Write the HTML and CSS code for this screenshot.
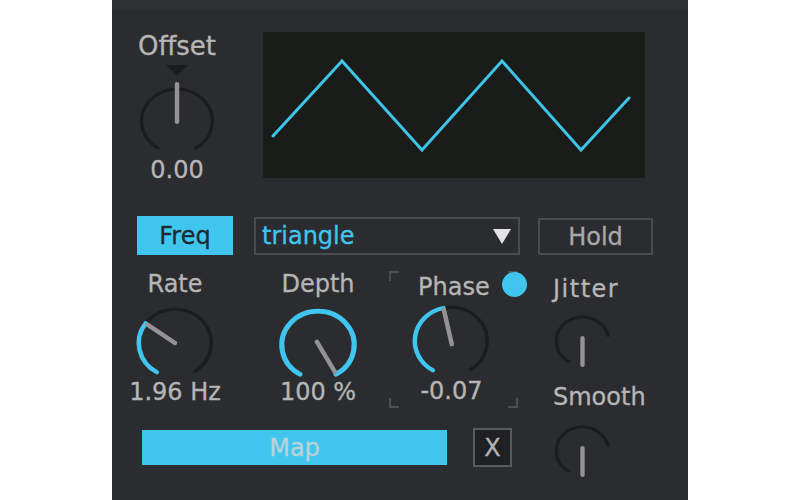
FILE: index.html
```html
<!DOCTYPE html>
<html>
<head>
<meta charset="utf-8">
<link rel="stylesheet" href="styles.css">
</head>
<body>
<div class="panel">
  <div class="top">
    <div class="offset">
      <div class="label big">Offset</div>
      <svg class="knob-offset" viewBox="0 0 76 92" width="84" height="92" preserveAspectRatio="none">
        <polygon class="mark" points="28,1 48,1 38,12"/>
        <path class="ring" d="M22 84.71 A32 32 0 1 1 54 84.71"/>
        <line class="needle" x1="38" y1="58" x2="38" y2="20"/>
      </svg>
      <div class="value">0.00</div>
    </div>
    <div class="display">
      <svg viewBox="0 0 382 146" width="382" height="146">
        <polyline class="wave" points="10,104 79,29 159,118 239,29 318,118 366,66"/>
      </svg>
    </div>
  </div>

  <div class="controls">
    <div class="btn freq">Freq</div>
    <div class="dropdown"><span class="dd-text">triangle</span><span class="dd-arrow"></span></div>
    <div class="btn hold">Hold</div>
  </div>

  <div class="bottom">
    <div class="left">
      <div class="knob-row">
        <div class="unit rate">
          <div class="label">Rate</div>
          <svg class="knob" viewBox="0 0 76 72" width="86" height="76" preserveAspectRatio="none">
            <path class="ring" d="M22 63.71 A32 32 0 1 1 54 63.71"/>
            <path class="arc" d="M22 63.71 A32 32 0 0 1 12.11 17.19"/>
            <line class="needle" x1="38" y1="36" x2="13.5" y2="18.5"/>
          </svg>
          <div class="value">1.96 Hz</div>
        </div>
        <div class="unit depth">
          <div class="label">Depth</div>
          <svg class="knob" viewBox="0 0 76 72" width="86" height="76" preserveAspectRatio="none">
            <path class="arc" d="M22 63.71 A32 32 0 1 1 54 63.71"/>
            <line class="needle" x1="37" y1="33" x2="53" y2="61.5"/>
          </svg>
          <div class="value">100 %</div>
        </div>
        <div class="phase">
          <div class="phase-head">
            <span class="label">Phase</span>
            <span class="dot"></span>
          </div>
          <svg class="knob" viewBox="0 0 76 72" width="86" height="76" preserveAspectRatio="none">
            <path class="ring" d="M22 63.71 A32 32 0 1 1 54 63.71"/>
            <path class="arc" d="M22 63.71 A32 32 0 0 1 31.35 4.7"/>
            <line class="needle" x1="38.7" y1="39.1" x2="31.6" y2="6"/>
          </svg>
          <div class="value">-0.07</div>
        </div>
      </div>
      <div class="map-row">
        <div class="map">Map</div>
        <div class="xbtn">X</div>
      </div>
    </div>
    <div class="right">
      <div class="label jitter">Jitter</div>
      <svg class="small-knob" viewBox="0 0 54 58" width="59" height="58" preserveAspectRatio="none">
        <path class="ring" d="M15 49.78 A24 24 0 1 1 50.64 24.83"/>
        <line class="needle" x1="27" y1="26" x2="27" y2="53"/>
      </svg>
      <div class="label smooth">Smooth</div>
      <svg class="small-knob smooth-knob" viewBox="0 0 54 58" width="59" height="58" preserveAspectRatio="none">
        <path class="ring" d="M15 49.78 A24 24 0 1 1 50.64 24.83"/>
        <line class="needle" x1="27" y1="26" x2="27" y2="53"/>
      </svg>
    </div>
  </div>
</div>
</body>
</html>
```

FILE: styles.css
```css
* { box-sizing: border-box; }

html, body {
  margin: 0;
  padding: 0;
  background: #ffffff;
}

body {
  font-family: "DejaVu Sans", "Liberation Sans", sans-serif;
  font-size: 24px;
  line-height: 28px;
  color: #b4b4b4;
  -webkit-text-stroke: 0.3px currentColor;
}

.panel {
  width: 576px;
  height: 500px;
  margin-left: 112px;
  background: linear-gradient(#2f3034 0, #2f3034 9px, #2b2c30 9px);
  overflow: hidden;
}

svg { display: block; }

.label, .value { white-space: nowrap; color: #b6b6b6; }

.label.big { font-size: 26px; }

/* ---- top ---- */
.top {
  display: flex;
  align-items: flex-start;
  padding-top: 32px;
}

.offset {
  width: 130px;
  display: flex;
  flex-direction: column;
  align-items: center;
}

.knob-offset { margin-top: 4px; }

.display {
  margin-left: 21px;
  width: 382px;
  height: 146px;
  background: #1a1c1a;
}

.wave {
  fill: none;
  stroke: #3ec4e8;
  stroke-width: 3;
  stroke-linejoin: miter;
  stroke-linecap: round;
}

/* ---- svg parts ---- */
.ring {
  fill: none;
  stroke: #1b1c1f;
  stroke-width: 3;
}

.arc {
  fill: none;
  stroke: #40c6ee;
  stroke-width: 4;
  stroke-linecap: round;
}

.needle {
  stroke: #949494;
  stroke-width: 4;
  stroke-linecap: round;
}

.mark { fill: #1b1c1f; }

/* ---- controls ---- */
.controls {
  display: flex;
  align-items: flex-start;
  margin-top: 32px;
  height: 39px;
}

.btn {
  display: flex;
  align-items: center;
  justify-content: center;
}

.freq {
  margin-left: 25px;
  width: 96px;
  height: 39px;
  background: #40c6ee;
  color: #1d2833;
}

.dropdown {
  margin-left: 21px;
  margin-top: 1px;
  width: 266px;
  height: 38px;
  border: 2px solid #4b4c50;
  display: flex;
  align-items: center;
  justify-content: space-between;
  padding: 0 7px 0 6px;
}

.dd-text { color: #40c6ee; }

.dd-arrow {
  width: 0;
  height: 0;
  border-left: 9px solid transparent;
  border-right: 9px solid transparent;
  border-top: 15px solid #e2e2e2;
}

.hold {
  margin-left: 18px;
  margin-top: 2px;
  width: 115px;
  height: 37px;
  border: 2px solid #4b4c50;
  color: #a9a9a9;
}

/* ---- bottom ---- */
.bottom {
  display: flex;
  align-items: flex-start;
}

.left {
  width: 441px;
  display: flex;
  flex-direction: column;
}

.knob-row {
  display: flex;
  align-items: flex-start;
}

.unit {
  display: flex;
  flex-direction: column;
  align-items: center;
  padding-top: 15px;
}

.rate { width: 126px; }
.rate .knob { margin-top: 7px; }
.rate .value { margin-top: -3px; }

.depth { width: 142px; margin-left: 9px; }
.depth .knob { margin-top: 9px; }
.depth .value { margin-top: -5px; }

.depth .arc { stroke-width: 4.5; }

.phase {
  width: 129px;
  height: 137px;
  margin-top: 16px;
  padding-top: 2px;
  display: flex;
  flex-direction: column;
  --bc: #4e4f53;
  background:
    linear-gradient(var(--bc), var(--bc)) left top / 10px 2px no-repeat,
    linear-gradient(var(--bc), var(--bc)) left top / 2px 10px no-repeat,
    linear-gradient(var(--bc), var(--bc)) right top / 10px 2px no-repeat,
    linear-gradient(var(--bc), var(--bc)) right top / 2px 10px no-repeat,
    linear-gradient(var(--bc), var(--bc)) left bottom / 10px 2px no-repeat,
    linear-gradient(var(--bc), var(--bc)) left bottom / 2px 10px no-repeat,
    linear-gradient(var(--bc), var(--bc)) right bottom / 10px 2px no-repeat,
    linear-gradient(var(--bc), var(--bc)) right bottom / 2px 10px no-repeat;
}

.phase-head {
  display: flex;
  align-items: flex-start;
  margin-left: 29px;
  gap: 12px;
}

.dot {
  flex: 0 0 25px;
  width: 25px;
  height: 25px;
  border-radius: 50%;
  background: #40c6ee;
  margin-top: -1px;
}

.phase .knob { margin-top: 2px; margin-left: 19px; }
.phase .value { width: 125px; text-align: center; margin-top: -2px; }

.map-row {
  display: flex;
  align-items: center;
  margin-top: 20px;
  padding-left: 30px;
  height: 39px;
}

.map {
  width: 305px;
  height: 35px;
  background: #40c6ee;
  color: #bcd2da;
  display: flex;
  align-items: center;
  justify-content: center;
}

.xbtn {
  margin-left: 26px;
  width: 39px;
  height: 39px;
  border: 2px solid #58595d;
  background: #1f2023;
  color: #b4b4b4;
  display: flex;
  align-items: center;
  justify-content: center;
}

.right {
  display: flex;
  flex-direction: column;
  align-items: flex-start;
  padding-top: 20px;
}

.label.jitter { letter-spacing: 1.5px; }

.small-knob { margin-top: 9px; }
.label.smooth { margin-top: 13px; }
.smooth-knob { margin-top: 11px; }
```
